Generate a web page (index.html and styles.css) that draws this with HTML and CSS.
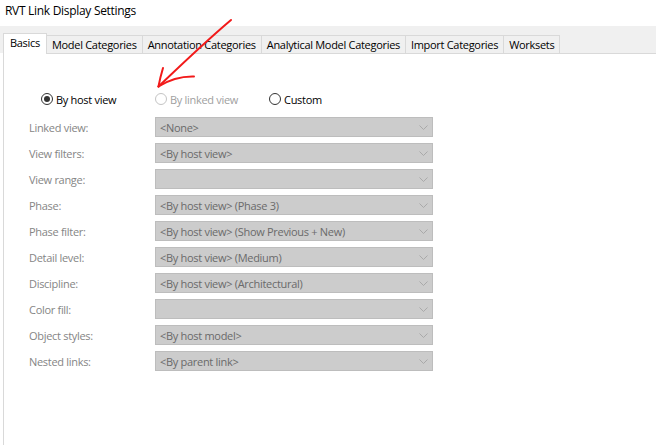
FILE: index.html
```html
<!DOCTYPE html>
<html>
<head>
<meta charset="utf-8">
<link rel="stylesheet" href="styles.css">
</head>
<body>
<div class="title">RVT Link Display Settings</div>
<div class="tabstrip">
  <div class="tab active">Basics</div>
  <div class="tab">Model Categories</div>
  <div class="tab">Annotation Categories</div>
  <div class="tab">Analytical Model Categories</div>
  <div class="tab">Import Categories</div>
  <div class="tab">Worksets</div>
</div>
<div class="content">
  <div class="radios">
    <div class="radio"><span class="circle checked"></span><span>By host view</span></div>
    <div class="radio disabled"><span class="circle"></span><span>By linked view</span></div>
    <div class="radio"><span class="circle"></span><span>Custom</span></div>
  </div>
  <div class="form">
    <div class="label">Linked view:</div><div class="select"><span>&lt;None&gt;</span><svg class="chev" width="9" height="5" viewBox="0 0 9 5"><path d="M0.5 0.5 L4.5 4.5 L8.5 0.5" fill="none" stroke="#a9a9a9" stroke-width="1"/></svg></div>
    <div class="label">View filters:</div><div class="select"><span>&lt;By host view&gt;</span><svg class="chev" width="9" height="5" viewBox="0 0 9 5"><path d="M0.5 0.5 L4.5 4.5 L8.5 0.5" fill="none" stroke="#a9a9a9" stroke-width="1"/></svg></div>
    <div class="label">View range:</div><div class="select"><span></span><svg class="chev" width="9" height="5" viewBox="0 0 9 5"><path d="M0.5 0.5 L4.5 4.5 L8.5 0.5" fill="none" stroke="#a9a9a9" stroke-width="1"/></svg></div>
    <div class="label">Phase:</div><div class="select"><span>&lt;By host view&gt; (Phase 3)</span><svg class="chev" width="9" height="5" viewBox="0 0 9 5"><path d="M0.5 0.5 L4.5 4.5 L8.5 0.5" fill="none" stroke="#a9a9a9" stroke-width="1"/></svg></div>
    <div class="label">Phase filter:</div><div class="select"><span>&lt;By host view&gt; (Show Previous + New)</span><svg class="chev" width="9" height="5" viewBox="0 0 9 5"><path d="M0.5 0.5 L4.5 4.5 L8.5 0.5" fill="none" stroke="#a9a9a9" stroke-width="1"/></svg></div>
    <div class="label">Detail level:</div><div class="select"><span>&lt;By host view&gt; (Medium)</span><svg class="chev" width="9" height="5" viewBox="0 0 9 5"><path d="M0.5 0.5 L4.5 4.5 L8.5 0.5" fill="none" stroke="#a9a9a9" stroke-width="1"/></svg></div>
    <div class="label">Discipline:</div><div class="select"><span>&lt;By host view&gt; (Architectural)</span><svg class="chev" width="9" height="5" viewBox="0 0 9 5"><path d="M0.5 0.5 L4.5 4.5 L8.5 0.5" fill="none" stroke="#a9a9a9" stroke-width="1"/></svg></div>
    <div class="label">Color fill:</div><div class="select"><span></span><svg class="chev" width="9" height="5" viewBox="0 0 9 5"><path d="M0.5 0.5 L4.5 4.5 L8.5 0.5" fill="none" stroke="#a9a9a9" stroke-width="1"/></svg></div>
    <div class="label">Object styles:</div><div class="select"><span>&lt;By host model&gt;</span><svg class="chev" width="9" height="5" viewBox="0 0 9 5"><path d="M0.5 0.5 L4.5 4.5 L8.5 0.5" fill="none" stroke="#a9a9a9" stroke-width="1"/></svg></div>
    <div class="label">Nested links:</div><div class="select"><span>&lt;By parent link&gt;</span><svg class="chev" width="9" height="5" viewBox="0 0 9 5"><path d="M0.5 0.5 L4.5 4.5 L8.5 0.5" fill="none" stroke="#a9a9a9" stroke-width="1"/></svg></div>
  </div>
</div>
<svg class="arrow" width="656" height="120" viewBox="0 0 656 120">
  <path d="M231 20 Q205 42 158.5 86.5" fill="none" stroke="#f21a1a" stroke-width="2" stroke-linecap="round"/>
  <path d="M163 68 Q160 78 158.5 86.5" fill="none" stroke="#f21a1a" stroke-width="2" stroke-linecap="round"/>
  <path d="M158.5 86.5 Q175 76 194 76.5" fill="none" stroke="#f21a1a" stroke-width="2" stroke-linecap="round"/>
</svg>
</body>
</html>
```
FILE: styles.css
```css
html, body {
  margin: 0;
  padding: 0;
  background: #ffffff;
  height: 100%;
  overflow: hidden;
}
body {
  font-family: "Open Sans", "Noto Sans", sans-serif;
  font-size: 11px;
  letter-spacing: -0.3px;
  color: #000;
  position: relative;
}
.title {
  height: 26px;
  box-sizing: border-box;
  padding: 2px 0 0 5px;
  font-size: 12px;
  letter-spacing: -0.3px;
  line-height: 18px;
}
.tabstrip {
  background: #f0f0f0;
  height: 27px;
  box-sizing: border-box;
  display: flex;
  align-items: flex-end;
  padding-left: 3px;
}
.tab {
  height: 18px;
  box-sizing: border-box;
  border: 1px solid #d9d9d9;
  border-bottom: none;
  padding: 0 5px;
  line-height: 17px;
  margin-left: -1px;
  background: #f0f0f0;
  white-space: nowrap;
}
.tab:first-child { margin-left: 0; }
.tab.active {
  height: 21px;
  background: #fff;
  padding: 0 6px;
  line-height: 18px;
  margin-bottom: -1px;
  position: relative;
  z-index: 1;
}
.content {
  margin-left: 3px;
  border-left: 1px solid #d9d9d9;
  border-top: 1px solid #d9d9d9;
  height: 400px;
  padding-top: 35px;
  box-sizing: border-box;
}
.radios {
  display: grid;
  grid-template-columns: 114px 114px 114px;
  padding-left: 37px;
  height: 20px;
  align-items: center;
}
.radio {
  display: flex;
  align-items: center;
  gap: 3px;
  white-space: nowrap;
}
.radio.disabled { color: #a0a0a0; }
.circle {
  width: 12px;
  height: 12px;
  box-sizing: border-box;
  border: 1px solid #333;
  border-radius: 50%;
  background: #fff;
  display: flex;
  align-items: center;
  justify-content: center;
}
.radio.disabled .circle { border-color: #c4c4c4; }
.circle.checked::after {
  content: "";
  width: 6px;
  height: 6px;
  border-radius: 50%;
  background: #333;
}
.form {
  margin-top: 8px;
  padding-left: 25px;
  display: grid;
  grid-template-columns: 126px 278px;
  row-gap: 6px;
  align-items: center;
}
.label {
  color: #858585;
  white-space: nowrap;
}
.select {
  height: 20px;
  box-sizing: border-box;
  background: #cccccc;
  border: 1px solid #bdbdbd;
  display: flex;
  align-items: center;
  justify-content: space-between;
  padding: 0 4px 0 4px;
  color: #6a6a6a;
  white-space: nowrap;
}
.chev { flex: none; }
.arrow {
  position: absolute;
  left: 0;
  top: 0;
  pointer-events: none;
}
```
